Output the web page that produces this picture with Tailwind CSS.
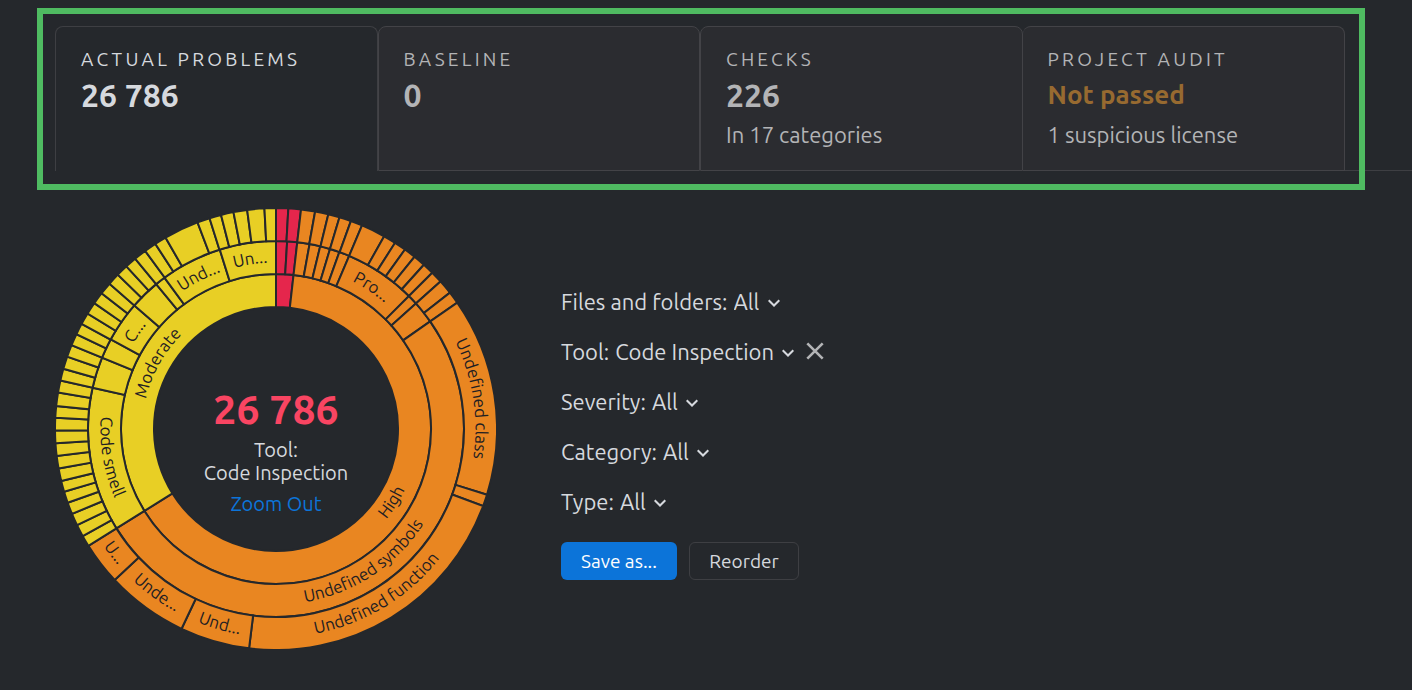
<!DOCTYPE html>
<html lang="en">
<head>
    <meta charset="UTF-8">
    <meta name="viewport" content="width=device-width, initial-scale=1.0">
    <title>Inspection report</title>
    <script src="https://cdn.jsdelivr.net/npm/@tailwindcss/browser@4"></script>
</head>
<body class="bg-[#25282c] min-h-screen flex flex-col text-[#d6d9de] font-[Ubuntu,'Open_Sans',sans-serif] overflow-x-hidden">

    <header class="flex pl-[55px] pt-[26px]">
        <div class="relative flex-1">
            <div role="tablist" class="grid grid-cols-4 h-[145px]">
                <button role="tab" aria-selected="true" class="flex flex-col items-start text-left px-[25px] pt-[19px] border border-b-0 border-[#3e3f43] rounded-t-lg">
                    <span class="text-[19px] leading-[26px] tracking-[0.17em]">ACTUAL PROBLEMS</span>
                    <span class="text-[32px] leading-[46px] font-bold">26 786</span>
                </button>
                <button role="tab" aria-selected="false" class="flex flex-col items-start text-left px-[25px] pt-[19px] bg-[#2b2c30] border border-[#434347] rounded-t-lg text-[#b3b4b6]">
                    <span class="text-[19px] leading-[26px] tracking-[0.17em]">BASELINE</span>
                    <span class="text-[32px] leading-[46px] font-bold">0</span>
                </button>
                <button role="tab" aria-selected="false" class="flex flex-col items-start text-left px-[25px] pt-[19px] bg-[#2b2c30] border border-[#434347] rounded-t-lg text-[#b3b4b6]">
                    <span class="text-[19px] leading-[26px] tracking-[0.17em]">CHECKS</span>
                    <span class="text-[32px] leading-[46px] font-bold">226</span>
                    <span class="text-[22px] leading-[34px]">In 17 categories</span>
                </button>
                <button role="tab" aria-selected="false" class="flex flex-col items-start text-left px-[25px] pt-[19px] bg-[#2b2c30] border border-l-0 border-[#434347] rounded-t-lg text-[#b3b4b6]">
                    <span class="text-[19px] leading-[26px] tracking-[0.17em]">PROJECT AUDIT</span>
                    <span class="text-[26px] leading-[46px] font-bold text-[#976a30]">Not passed</span>
                    <span class="text-[22px] leading-[34px]">1 suspicious license</span>
                </button>
            </div>
            <div class="absolute -left-[18px] -right-5 -top-[18px] -bottom-[19px] border-6 border-[#4fbb61] pointer-events-none"></div>
        </div>
        <div class="w-[67px] border-b border-[#3e3f43]"></div>
    </header>

    <main class="flex items-center gap-[65px] pl-14 pt-[38px]">
        <div class="relative w-[440px] h-[440px] flex-shrink-0">
            <svg id="sunburst" viewBox="-220 -220 440 440" class="w-full h-full" role="img" aria-label="Problems by severity, category and type"></svg>
            <div class="absolute inset-[100px] pt-[75px] flex flex-col items-center pointer-events-none">
                <div class="text-[41px] leading-[50px] font-bold text-[#f94562]">26 786</div>
                <div class="text-xl leading-[23px] text-center mt-1">Tool:<br>Code Inspection</div>
                <a href="#" class="text-xl leading-8 mt-1 text-[#0c74d9] pointer-events-auto">Zoom Out</a>
            </div>
        </div>

        <form class="flex flex-col gap-5 pt-2 text-[22px]">
            <div class="flex items-center h-[30px]">
                <label for="files">Files and folders:</label>
                <select id="files" class="appearance-none field-sizing-content bg-transparent ml-[6px]"><option>All</option></select>
                <svg class="w-3 h-2 ml-[9px] mt-1" viewBox="0 0 12 8" fill="none" stroke="currentColor" stroke-width="2"><path d="M.7 1.2 6 6.5l5.3-5.3"/></svg>
            </div>
            <div class="flex items-center h-[30px]">
                <label for="tool">Tool:</label>
                <select id="tool" class="appearance-none field-sizing-content bg-transparent ml-[6px]"><option>Code Inspection</option></select>
                <svg class="w-3 h-2 ml-2 mt-1" viewBox="0 0 12 8" fill="none" stroke="currentColor" stroke-width="2"><path d="M.7 1.2 6 6.5l5.3-5.3"/></svg>
                <button type="button" aria-label="Clear tool filter" class="ml-3 text-[#b3b4b6]">
                    <svg class="block w-[18px] h-[18px]" viewBox="0 0 18 18" fill="none" stroke="currentColor" stroke-width="2.6"><path d="m1.3 1.3 15.4 15.4m0-15.4L1.3 16.7"/></svg>
                </button>
            </div>
            <div class="flex items-center h-[30px]">
                <label for="severity">Severity:</label>
                <select id="severity" class="appearance-none field-sizing-content bg-transparent ml-[6px]"><option>All</option></select>
                <svg class="w-3 h-2 ml-2 mt-1" viewBox="0 0 12 8" fill="none" stroke="currentColor" stroke-width="2"><path d="M.7 1.2 6 6.5l5.3-5.3"/></svg>
            </div>
            <div class="flex items-center h-[30px]">
                <label for="category">Category:</label>
                <select id="category" class="appearance-none field-sizing-content bg-transparent ml-[6px]"><option>All</option></select>
                <svg class="w-3 h-2 ml-2 mt-1" viewBox="0 0 12 8" fill="none" stroke="currentColor" stroke-width="2"><path d="M.7 1.2 6 6.5l5.3-5.3"/></svg>
            </div>
            <div class="flex items-center h-[30px]">
                <label for="type">Type:</label>
                <select id="type" class="appearance-none field-sizing-content bg-transparent ml-[6px]"><option>All</option></select>
                <svg class="w-3 h-2 ml-2 mt-1" viewBox="0 0 12 8" fill="none" stroke="currentColor" stroke-width="2"><path d="M.7 1.2 6 6.5l5.3-5.3"/></svg>
            </div>
            <div class="flex gap-3 text-[19px] mt-1.5">
                <button type="button" class="h-[38px] w-[116px] rounded-md bg-[#0c74d9] text-white">Save as...</button>
                <button type="button" class="h-[38px] w-[110px] rounded-md border border-[#3e3f43]">Reorder</button>
            </div>
        </form>
    </main>

    <script>
        const RED = '#e5264c', ORANGE = '#e98621', YELLOW = '#e8cf25';

        // Each ring: list of end angles in degrees, clockwise from the top
        const rings = [
            { inner: 122, outer: 155, ends: [6.5, 238.1, 360] },
            { inner: 155, outer: 188, ends: [3.4, 6.5, 10.3, 13.6, 16.7, 19.7, 22.9, 45, 48.1, 55.1, 238.1, 282.7, 292.3, 298.5, 311.1, 320.4, 323.6, 342.6, 360] },
            { inner: 188, outer: 221, ends: [3.2, 6.5, 10.2, 13.7, 16.7, 19.8, 22.9, 29.3, 32.6, 35.7, 38.8, 42, 45, 48.1, 51.9, 55.1, 107.3, 110.4, 187, 205.3, 226.9, 238.1,
                241, 244.2, 247.4, 250.5, 253.5, 256.4, 259.7, 263, 266.3, 269.6, 272.9, 276, 279.5, 282.7, 285.8, 289.1, 292.3, 295.4, 298.4, 301.5, 304.7, 307.9,
                311.1, 314.3, 317.4, 320.4, 323.7, 326.9, 330, 339.2, 342.5, 345.6, 348.9, 352.5, 357, 360] },
        ];
        const labels = [
            [0, 122.3, 'High'], [0, 299, 'Moderate'],
            [1, 34, 'Pro...'], [1, 146.6, 'Undefined symbols'], [1, 260.4, 'Code smell'], [1, 304.8, 'C...'], [1, 333.1, 'Und...'], [1, 351.3, 'Un...'],
            [2, 81.2, 'Undefined class'], [2, 148.7, 'Undefined function'], [2, 196.1, 'Und...'], [2, 216.1, 'Unde...'], [2, 232.5, 'U...'],
        ];

        const point = (r, deg) => {
            const a = deg * Math.PI / 180;
            return (r * Math.sin(a)).toFixed(2) + ' ' + (-r * Math.cos(a)).toFixed(2);
        };

        let svg = '';
        for (const ring of rings) {
            let start = 0;
            for (const end of ring.ends) {
                const large = end - start > 180 ? 1 : 0;
                const color = end <= 6.5 ? RED : end <= 238.1 ? ORANGE : YELLOW;
                svg += `<path fill="${color}" stroke="#25282c" stroke-width="2" d="M${point(ring.outer, start)}A${ring.outer} ${ring.outer} 0 ${large} 1 ${point(ring.outer, end)}L${point(ring.inner, end)}A${ring.inner} ${ring.inner} 0 ${large} 0 ${point(ring.inner, start)}Z"/>`;
                start = end;
            }
        }
        labels.forEach(([level, mid, text], i) => {
            // labels in the lower half run counter-clockwise so they stay readable
            const flip = mid > 90 && mid < 270;
            const r = (rings[level].inner + rings[level].outer) / 2 + (flip ? 4 : -5);
            const from = flip ? mid + 60 : mid - 60, to = flip ? mid - 60 : mid + 60;
            svg += `<path id="arc${i}" fill="none" d="M${point(r, from)}A${r} ${r} 0 0 ${flip ? 0 : 1} ${point(r, to)}"/>`;
            svg += `<text font-size="17" fill="#1f2023" text-anchor="middle"><textPath href="#arc${i}" startOffset="50%">${text}</textPath></text>`;
        });
        document.getElementById('sunburst').innerHTML = svg;
    </script>
</body>
</html>
